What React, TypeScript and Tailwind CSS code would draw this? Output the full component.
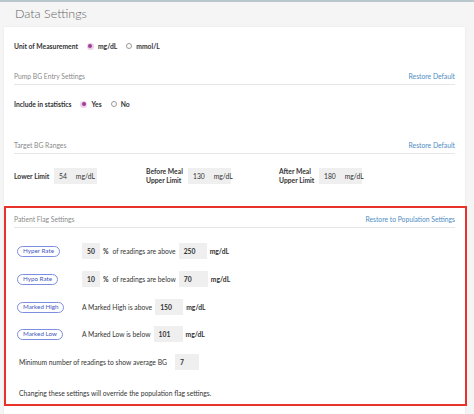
import React from 'react';

// ── Small pieces ──────────────────────────────────────────────────────────────

function Radio({ checked, label }: { checked?: boolean; label: string }) {
  return (
    <span className="flex items-center gap-[4px]">
      {checked ? (
        <span className="w-[7px] h-[7px] rounded-full bg-[#ecd0ea] flex items-center justify-center">
          <span className="w-[4px] h-[4px] rounded-full bg-[#9c3f98]" />
        </span>
      ) : (
        <span className="w-[6px] h-[6px] rounded-full border border-[#9a9a9a] bg-white" />
      )}
      <span className="font-bold text-[#333]">{label}</span>
    </span>
  );
}

function Field({ value, unit, w }: { value: string; unit?: string; w: string }) {
  return (
    <span className={`h-[16px] bg-[#efefef] flex items-center pl-[5px] gap-[9px] text-[#333] ${w}`}>
      <span>{value}</span>
      {unit && <span>{unit}</span>}
    </span>
  );
}

function SectionHeader({ title, link }: { title: string; link: string }) {
  return (
    <div className="h-[16px] flex items-center justify-between border-b border-[#e6e6e6] mr-[10px]">
      <span className="text-[#8a8a8a]">{title}</span>
      <span className="text-[#4f8cc4]">{link}</span>
    </div>
  );
}

function Badge({ label }: { label: string }) {
  return (
    <span className="h-[11px] px-[5px] rounded-full border border-[#7c8ee0] text-[#3f57c0] text-[6.25px] flex items-center">
      {label}
    </span>
  );
}

// ── Main ──────────────────────────────────────────────────────────────────────

export default function App() {
  return (
    <div
      className="w-[474px] h-[414px] bg-[#f5f5f5] overflow-hidden text-[6.75px] leading-none text-[#333]"
      style={{ fontFamily: 'Lato, "Open Sans", sans-serif' }}
    >
      <div className="h-[2px] bg-[#b7c7cb]" />
      <div className="h-[25px] pl-[15px] flex items-center text-[12.5px] font-light text-[#666]">Data Settings</div>

      <div className="ml-[4px] w-[461px] h-[400px] bg-white shadow-[0_0_2px_rgba(0,0,0,0.08)]">
        <div className="pl-[10px]">
          {/* Unit of measurement */}
          <div className="pt-[11px] h-[27px] flex items-center gap-[9px]">
            <span className="font-bold">Unit of Measurement</span>
            <Radio checked label="mg/dL" />
            <Radio label="mmol/L" />
          </div>

          <div className="mt-[15px]">
            <SectionHeader title="Pump BG Entry Settings" link="Restore Default" />
          </div>

          <div className="mt-[11px] h-[16px] flex items-center gap-[9px]">
            <span className="font-bold">Include in statistics</span>
            <Radio checked label="Yes" />
            <Radio label="No" />
          </div>

          <div className="mt-[26px]">
            <SectionHeader title="Target BG Ranges" link="Restore Default" />
          </div>

          <div className="mt-[13px] h-[18px] grid grid-cols-[132px_133px_133px] font-bold">
            <div className="flex items-center gap-[4px]">
              <span className="w-[36px]">Lower Limit</span>
              <Field value="54" unit="mg/dL" w="w-[43px] font-normal" />
            </div>
            <div className="flex items-center gap-[4px]">
              <span className="w-[38px] leading-[9px]">Before Meal<br />Upper Limit</span>
              <Field value="130" unit="mg/dL" w="w-[43px] font-normal" />
            </div>
            <div className="flex items-center gap-[4px]">
              <span className="w-[36px] leading-[9px]">After Meal<br />Upper Limit</span>
              <Field value="180" unit="mg/dL" w="w-[43px] font-normal" />
            </div>
          </div>
        </div>

        {/* Patient flag settings */}
        <div className="mt-[21px] w-[463px] border-2 border-[#e8322c]">
          <div className="pl-[8px] pt-[4px]">
            <SectionHeader title="Patient Flag Settings" link="Restore to Population Settings" />
          </div>

          <div className="pl-[11px] flex flex-col">
            <div className="mt-[15px] h-[16px] flex items-center">
              <span className="w-[65px] flex"><Badge label="Hyper Rate" /></span>
              <Field value="50" w="w-[18px] font-bold" />
              <span className="ml-[3px] font-bold">%</span>
              <span className="ml-[4px]">of readings are above</span>
              <span className="ml-[3px]"><Field value="250" w="w-[28px] font-bold" /></span>
              <span className="ml-[3px] font-bold">mg/dL</span>
            </div>
            <div className="mt-[12px] h-[16px] flex items-center">
              <span className="w-[65px] flex"><Badge label="Hypo Rate" /></span>
              <Field value="10" w="w-[18px] font-bold" />
              <span className="ml-[3px] font-bold">%</span>
              <span className="ml-[4px]">of readings are below</span>
              <span className="ml-[3px]"><Field value="70" w="w-[29px] font-bold" /></span>
              <span className="ml-[3px] font-bold">mg/dL</span>
            </div>
            <div className="mt-[12px] h-[16px] flex items-center">
              <span className="w-[65px] flex"><Badge label="Marked High" /></span>
              <span>A Marked High is above</span>
              <span className="ml-[3px]"><Field value="150" w="w-[28px] font-bold" /></span>
              <span className="ml-[3px] font-bold">mg/dL</span>
            </div>
            <div className="mt-[11px] h-[16px] flex items-center">
              <span className="w-[65px] flex"><Badge label="Marked Low" /></span>
              <span>A Marked Low is below</span>
              <span className="ml-[3px]"><Field value="101" w="w-[29px] font-bold" /></span>
              <span className="ml-[3px] font-bold">mg/dL</span>
            </div>
            <div className="mt-[12px] h-[16px] flex items-center pl-[2px]">
              <span>Minimum number of readings to show average BG</span>
              <span className="ml-[8px]"><Field value="7" w="w-[24px] font-bold" /></span>
            </div>
            <div className="mt-[18px] h-[10px] flex items-center pl-[2px] mb-[6px]">
              Changing these settings will override the population flag settings.
            </div>
          </div>
        </div>
      </div>
    </div>
  );
}
